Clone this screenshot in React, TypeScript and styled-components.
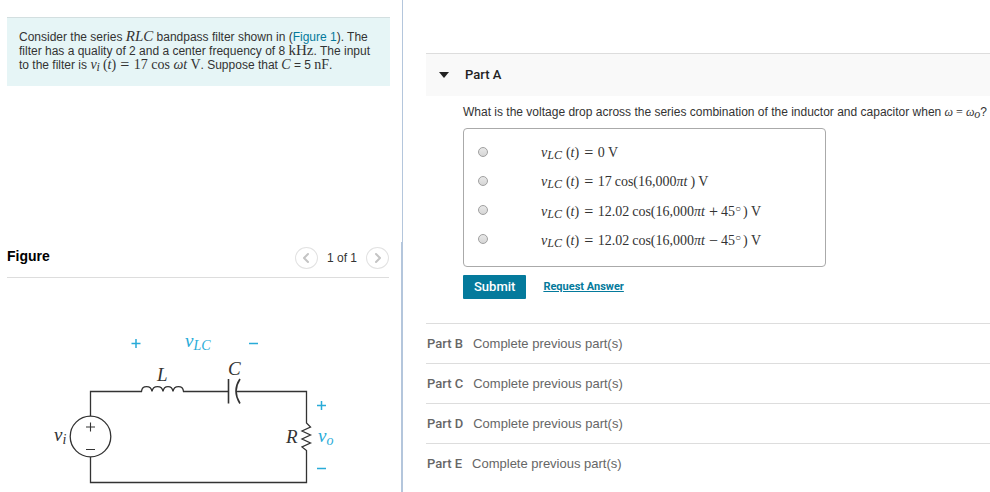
import React from "react";
import styled, { createGlobalStyle } from "styled-components";
import { ChevronLeft, ChevronRight } from "lucide-react";

const GlobalStyle = createGlobalStyle`
  * { box-sizing: border-box; }
  body {
    margin: 0;
    background: #fff;
    color: #333;
    font: 12px/14px "Liberation Sans", Arial, sans-serif;
  }
`;

const Page = styled.div`
  display: grid;
  grid-template-columns: minmax(0, 403fr) minmax(0, 587fr);
  min-height: 100vh;
`;

const Side = styled.aside`
  display: flex;
  flex-direction: column;
`;

const IntroPane = styled.section`
  min-height: 242px;
  padding: 17px 12px 0 7px;
  border-right: 1px solid #b4c6dc;
`;

const Intro = styled.p`
  margin: 0;
  padding: 12px 12px 14px;
  border-top: 1px solid #d3dfe0;
  background: #e6f5f6;
`;

const FigurePane = styled.section`
  flex: 1;
  padding: 0 12px 0 7px;
  border-right: 2px solid #b4c6dc;
`;

const FigureHead = styled.header`
  display: flex;
  align-items: center;
  justify-content: space-between;
  height: 36px;
  border-bottom: 1px solid #ddd;
`;

const FigureTitle = styled.h2`
  margin: 0 0 8px;
  color: #000;
  font-size: 14px;
  line-height: 16px;
`;

const Pager = styled.nav`
  display: flex;
  align-items: center;
  gap: 9px;
  padding-bottom: 3px;
`;

const PagerButton = styled.button`
  display: grid;
  place-items: center;
  width: 23px;
  height: 22px;
  padding: 0;
  border: 1px solid #e2e2e2;
  border-radius: 50%;
  background: #fff;
  color: #c4c4c4;
`;

const Circuit = styled.svg`
  display: block;
  width: 100%;
  height: auto;
  font-family: "Liberation Serif", "Times New Roman", serif;
  font-style: italic;
`;

const Main = styled.main`
  min-width: 0;
  padding: 53px 0 0 23px;
`;

const PartHeader = styled.header`
  display: flex;
  align-items: center;
  gap: 16px;
  height: 43px;
  padding-left: 13px;
  border-top: 1px solid #ddd;
  background: #f9f9f9;
`;

const Caret = styled.svg`
  width: 10px;
  height: 6px;
  fill: #222;
`;

const PartTitle = styled.h2`
  margin: 0;
  color: #222;
  font: 500 13px/16px Roboto, sans-serif;
`;

const PartBody = styled.form`
  padding: 8px 0 0 37px;
`;

const Question = styled.p`
  margin: 0;
  line-height: 16px;
`;

const Choices = styled.fieldset`
  max-width: 363px;
  min-width: 0;
  margin: 8px 0 0;
  padding: 10px 14px 11px;
  border: 1px solid #aaa;
  border-radius: 4px;
`;

const Choice = styled.label`
  display: flex;
  align-items: center;
  gap: 53px;
  height: 29px;
`;

const Radio = styled.input`
  appearance: none;
  flex: none;
  width: 10px;
  height: 10px;
  margin: 0 0 4px;
  border: 1px solid #a0a0a0;
  border-radius: 50%;
  background: linear-gradient(#e8e8e8, #d6d6d6);

  &:checked {
    background: radial-gradient(#444 35%, #e2e2e2 40%);
  }
`;

const MathText = styled.span<{ $size?: number }>`
  font-family: "Liberation Serif", "Times New Roman", serif;
  font-size: ${(p) => p.$size ?? 14}px;
  line-height: 0;
  white-space: nowrap;

  sub {
    font-size: 12px;
    vertical-align: -2px;
  }

  sup {
    font-size: 10px;
    vertical-align: 4px;
  }
`;

const Op = styled.span<{ $gap?: number }>`
  margin: 0 ${(p) => p.$gap ?? 1}px;
  font-size: 16px;
  vertical-align: -1px;
`;

const Group = styled.span<{ $gap?: number }>`
  margin: 0 ${(p) => p.$gap ?? 3}px;
`;

const Actions = styled.div`
  display: flex;
  align-items: center;
  gap: 17px;
  margin-top: 8px;
`;

const Submit = styled.button`
  height: 24px;
  padding: 0 11px;
  border: 0;
  border-radius: 1px;
  background: #047a9c;
  color: #fff;
  font: 500 13px/16px Roboto, sans-serif;
`;

const RequestLink = styled.a`
  color: #047a9c;
  font: 700 11px/14px Roboto, sans-serif;
`;

const LaterParts = styled.ul`
  margin: 24px 0 0;
  padding: 0;
  list-style: none;
`;

const LaterPart = styled.li`
  display: flex;
  align-items: center;
  gap: 10px;
  height: 40px;
  padding-left: 1px;
  border-top: 1px solid #ddd;
  color: #666;
  font-size: 13px;
  line-height: 16px;
`;

const LaterTitle = styled.span`
  font-family: Roboto, sans-serif;
  font-weight: 500;
`;

const FigureLink = styled.a`
  color: #047a9c;
  text-decoration: none;
`;

const cyan = "#29abd8";
const ink = "#333";

function Voltage() {
  return (
    <>
      <i>v</i>
      <sub><i>LC</i></sub>
      <Group $gap={4}>(<i>t</i>)</Group>
      <Op>=</Op>{" "}
    </>
  );
}

function Cosine({ amplitude, phase }: { amplitude: string; phase?: string }) {
  return (
    <>
      {amplitude}
      <Group $gap={3}>cos(16,000<i>πt</i></Group>
      {phase && <><Op>{phase}</Op><Group $gap={2}>45<sup>○</sup></Group></>}) V
    </>
  );
}

const choices = [
  <>0 V</>,
  <Cosine amplitude="17" />,
  <Cosine amplitude="12.02" phase="+" />,
  <Cosine amplitude="12.02" phase="−" />,
];

function CircuitFigure() {
  return (
    <Circuit viewBox="7 278 382 214" role="img" aria-label="Series RLC bandpass filter circuit">
      <g fill="none" stroke={ink} strokeWidth="1.3">
        <path d="M90.500 416V391.500H141.500C142 385 151 385 152 391.500C153 385 162 385 163 391.500C164 385 172 385 173 391.500C174 385 183 385 183.500 391.500H228M236 391.500H306.500V423L310.500 427L302 431L310.500 435L302 439L310.500 443L302 447L306.500 450.500V482.500H90.500V457" />
        <circle cx="90.500" cy="436.500" r="20.300" />
        <path d="M228.500 379V403.500M240 379Q232 391 240 403.500" strokeWidth="1.600" />
        <path d="M86 427H95M90.500 422.500V431.500M86 449.500H95" strokeWidth="1.100" />
      </g>
      <g stroke={cyan} strokeWidth="1.500">
        <path d="M131.500 343.500H140.500M136 339V348M249 343.500H258M317 405.500H326M321.500 401V410M317 468.500H326" />
      </g>
      <g fill={ink} fontSize="19">
        <text x="157" y="381">L</text>
        <text x="228" y="375">C</text>
        <text x="286" y="443">R</text>
        <text x="54" y="441">v<tspan fontSize="14" dy="3">i</tspan></text>
      </g>
      <g fill={cyan} fontSize="19">
        <text x="185" y="347">v<tspan fontSize="14" dy="3">LC</tspan></text>
        <text x="318" y="442">v<tspan fontSize="14" dy="3">o</tspan></text>
      </g>
    </Circuit>
  );
}

export default function App() {
  return (
    <>
      <GlobalStyle />
      <Page>
        <Side>
          <IntroPane>
            <Intro>
              Consider the series <MathText $size={15}><i>RLC</i></MathText> bandpass filter shown in (
              <FigureLink href="#figure">Figure 1</FigureLink>). The filter has a quality of 2 and a center
              frequency of 8 <MathText $size={15}>kHz</MathText>. The input to the filter is{" "}
              <MathText>
                <i>v</i><sub><i>i</i></sub><Group>(<i>t</i>)</Group><Op>=</Op> 17 cos <i>ωt</i> V
              </MathText>
              . Suppose that <MathText><i>C</i></MathText> = 5 <MathText>nF</MathText>.
            </Intro>
          </IntroPane>
          <FigurePane id="figure">
            <FigureHead>
              <FigureTitle>Figure</FigureTitle>
              <Pager aria-label="Figures">
                <PagerButton type="button" aria-label="Previous figure"><ChevronLeft size={16} strokeWidth={3} /></PagerButton>
                <span>1 of 1</span>
                <PagerButton type="button" aria-label="Next figure"><ChevronRight size={16} strokeWidth={3} /></PagerButton>
              </Pager>
            </FigureHead>
            <CircuitFigure />
          </FigurePane>
        </Side>
        <Main>
          <PartHeader>
            <Caret viewBox="0 0 10 6" aria-hidden="true"><path d="M0 0H10L5 6Z" /></Caret>
            <PartTitle>Part A</PartTitle>
          </PartHeader>
          <PartBody onSubmit={(e) => e.preventDefault()}>
            <Question>
              What is the voltage drop across the series combination of the inductor and capacitor when{" "}
              <MathText $size={12}><i>ω</i> = <i>ω</i><sub><i>o</i></sub></MathText>?
            </Question>
            <Choices aria-label="Voltage drop">
              {choices.map((choice, i) => (
                <Choice key={i}>
                  <Radio type="radio" name="answer" value={i} />
                  <MathText><Voltage />{choice}</MathText>
                </Choice>
              ))}
            </Choices>
            <Actions>
              <Submit type="submit">Submit</Submit>
              <RequestLink href="#answer">Request Answer</RequestLink>
            </Actions>
          </PartBody>
          <LaterParts>
            {["B", "C", "D", "E"].map((part) => (
              <LaterPart key={part}>
                <LaterTitle>Part {part}</LaterTitle>
                <span>Complete previous part(s)</span>
              </LaterPart>
            ))}
          </LaterParts>
        </Main>
      </Page>
    </>
  );
}
